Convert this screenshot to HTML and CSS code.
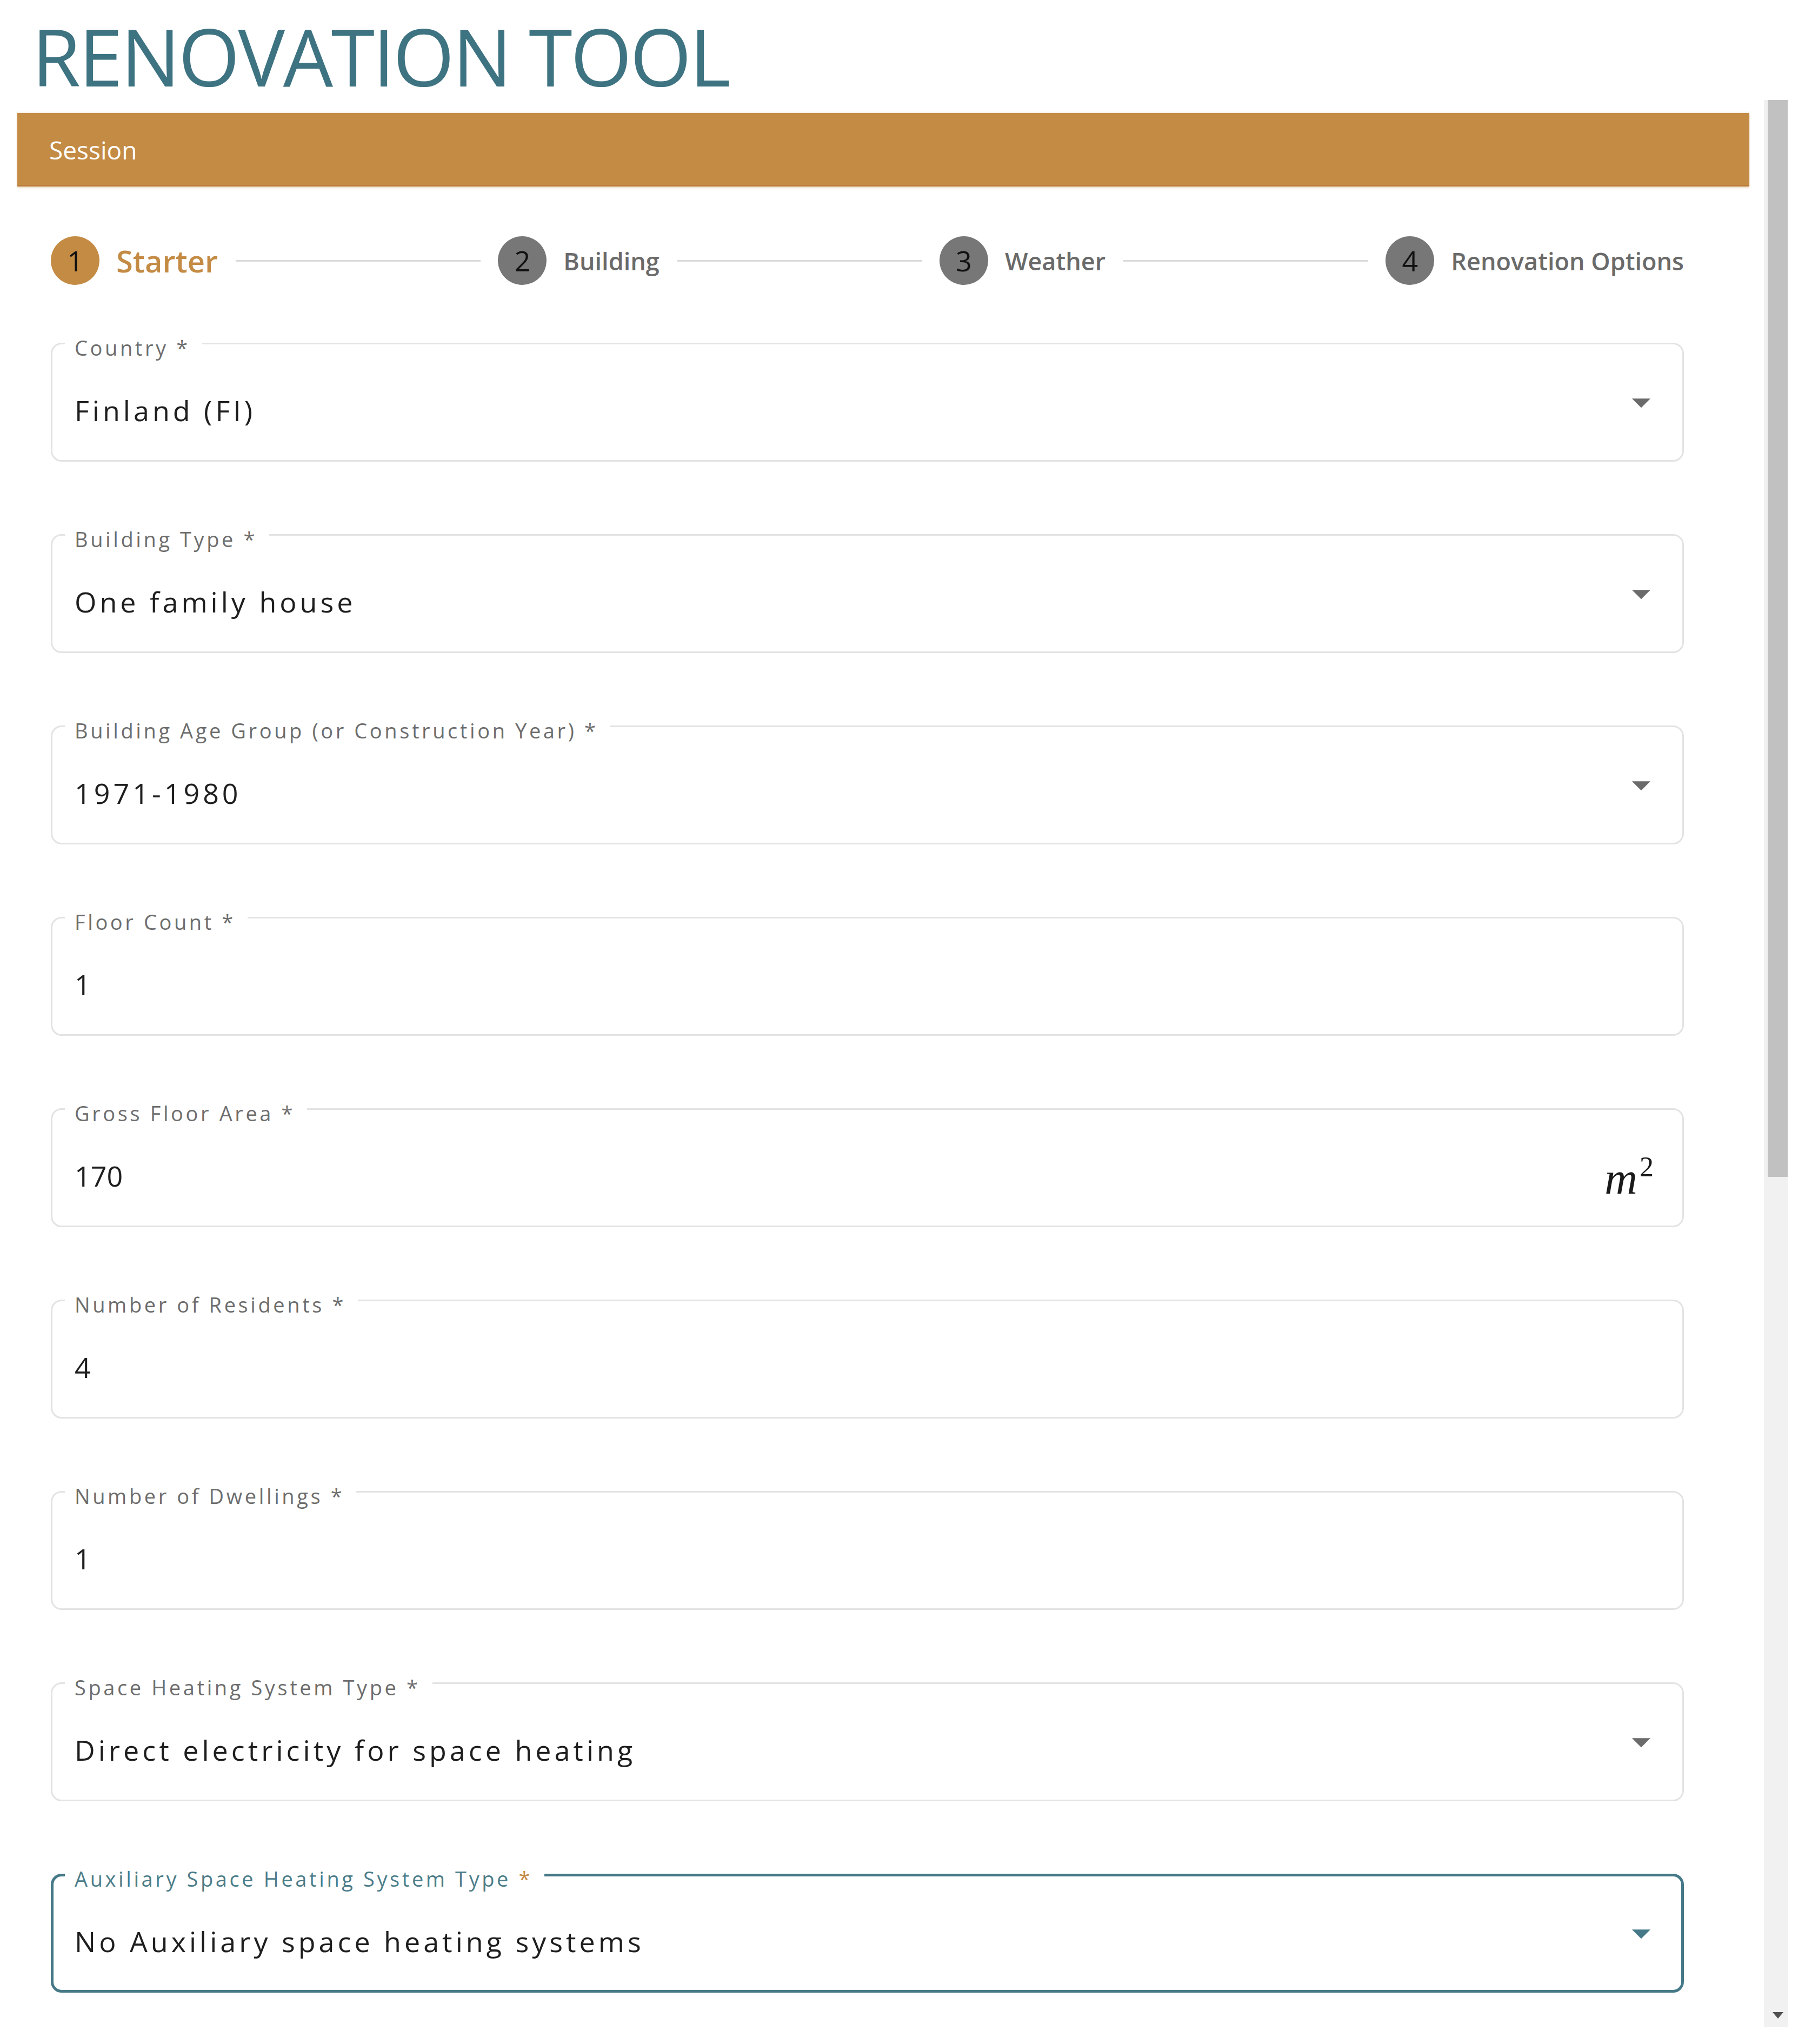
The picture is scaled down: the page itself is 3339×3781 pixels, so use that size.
FILE: index.html
```html
<!DOCTYPE html>
<html lang="en">
<head>
<meta charset="utf-8">
<title>Renovation Tool</title>
<link rel="stylesheet" href="styles.css">
</head>
<body>
<header class="page-head">
  <h1 class="title">RENOVATION TOOL</h1>
</header>
<div class="frame">
  <main class="content">
    <div class="session-bar">Session</div>
    <div class="inner">
      <ol class="stepper">
        <li class="step active"><span class="step-num">1</span><span class="step-label">Starter</span></li>
        <li class="connector"></li>
        <li class="step"><span class="step-num">2</span><span class="step-label">Building</span></li>
        <li class="connector"></li>
        <li class="step"><span class="step-num">3</span><span class="step-label">Weather</span></li>
        <li class="connector"></li>
        <li class="step"><span class="step-num">4</span><span class="step-label">Renovation Options</span></li>
      </ol>

      <form class="form">
        <div class="field">
          <span class="label">Country <span class="req">*</span></span>
          <span class="value select-value">Finland (FI)</span>
          <svg class="arrow" viewBox="0 0 24 24"><path d="M7 10l5 5 5-5z"/></svg>
        </div>
        <div class="field">
          <span class="label">Building Type <span class="req">*</span></span>
          <span class="value select-value">One family house</span>
          <svg class="arrow" viewBox="0 0 24 24"><path d="M7 10l5 5 5-5z"/></svg>
        </div>
        <div class="field">
          <span class="label">Building Age Group (or Construction Year) <span class="req">*</span></span>
          <span class="value select-value">1971-1980</span>
          <svg class="arrow" viewBox="0 0 24 24"><path d="M7 10l5 5 5-5z"/></svg>
        </div>
        <div class="field">
          <span class="label">Floor Count <span class="req">*</span></span>
          <span class="value">1</span>
        </div>
        <div class="field">
          <span class="label">Gross Floor Area <span class="req">*</span></span>
          <span class="value">170</span>
          <span class="unit"><span class="unit-m">m</span><sup class="unit-sup">2</sup></span>
        </div>
        <div class="field">
          <span class="label">Number of Residents <span class="req">*</span></span>
          <span class="value">4</span>
        </div>
        <div class="field">
          <span class="label">Number of Dwellings <span class="req">*</span></span>
          <span class="value">1</span>
        </div>
        <div class="field">
          <span class="label">Space Heating System Type <span class="req">*</span></span>
          <span class="value select-value">Direct electricity for space heating</span>
          <svg class="arrow" viewBox="0 0 24 24"><path d="M7 10l5 5 5-5z"/></svg>
        </div>
        <div class="field focused">
          <span class="label">Auxiliary Space Heating System Type <span class="req">*</span></span>
          <span class="value select-value">No Auxiliary space heating systems</span>
          <svg class="arrow" viewBox="0 0 24 24"><path d="M7 10l5 5 5-5z"/></svg>
        </div>
      </form>
    </div>
  </main>
  <div class="scrollbar">
    <div class="thumb"></div>
    <div class="track-space"></div>
    <div class="scroll-btn"><span class="scroll-arrow"></span></div>
  </div>
</div>
</body>
</html>
```

FILE: styles.css
```css
html, body {
  margin: 0;
  padding: 0;
  background: #ffffff;
}

body {
  font-family: "Open Sans", "Noto Sans", "DejaVu Sans", sans-serif;
  width: 3339px;
  height: 3781px;
  overflow: hidden;
}

.page-head {
  padding: 31px 0 8px 59px;
}

.title {
  margin: 0;
  height: 146px;
  font-size: 146px;
  line-height: 146px;
  font-weight: 400;
  color: #3e7382;
  letter-spacing: -3.4px;
  white-space: nowrap;
}

.frame {
  display: flex;
  height: 3565px;
  margin-right: 32px;
  overflow: hidden;
}

.content {
  flex: 1;
  padding: 24px 27px 0 32px;
  overflow: hidden;
}

.session-bar {
  height: 136px;
  line-height: 136px;
  background: #c48b45;
  color: #ffffff;
  font-size: 46px;
  padding-left: 59px;
  box-sizing: border-box;
  border-bottom: 3px solid #b97c38;
  box-shadow: 0 3px 3px rgba(196, 139, 69, 0.25), 0 -2px 2px rgba(196, 139, 69, 0.15);
}

.inner {
  padding: 0 121px 0 62px;
}

/* Stepper */
.stepper {
  list-style: none;
  margin: 92px 0 0 0;
  padding: 0;
  display: flex;
  align-items: center;
  height: 90px;
}

.step {
  display: flex;
  align-items: center;
  flex: none;
}

.step-num {
  width: 90px;
  height: 90px;
  border-radius: 50%;
  background: #777777;
  color: #111111;
  font-size: 52px;
  line-height: 90px;
  text-align: center;
}

.step.active .step-num {
  background: #c48b45;
}

.step-label {
  margin-left: 31px;
  font-size: 45px;
  font-weight: 600;
  color: #6a6a6a;
  white-space: nowrap;
}

.step.active .step-label {
  font-size: 56px;
  color: #c48b45;
}

.connector {
  flex: 1;
  height: 3px;
  background: #dadada;
  margin: 0 32px 0 33px;
}

/* Form fields */
.form {
  margin-top: 107px;
}

.field {
  position: relative;
  display: flex;
  align-items: center;
  height: 220px;
  box-sizing: border-box;
  border: 3px solid #e3e3e3;
  border-radius: 20px;
  padding: 0 35px 0 41px;
  margin-bottom: 134px;
}

.label {
  position: absolute;
  top: -13px;
  left: 23px;
  padding: 0 22px 0 18px;
  background: #ffffff;
  font-size: 38px;
  line-height: 38px;
  letter-spacing: 4.6px;
  color: #6d6d6d;
  white-space: nowrap;
}

.value {
  flex: 1;
  margin-top: 30px;
  font-size: 52px;
  line-height: 52px;
  color: #1e1e1e;
  white-space: nowrap;
}

.select-value {
  letter-spacing: 6px;
}

.arrow {
  width: 82px;
  height: 82px;
  flex: none;
  fill: #6b6b6b;
}

.unit {
  flex: none;
  margin-right: 18px;
  margin-top: 40px;
  font-family: "Liberation Serif", "Times New Roman", serif;
  color: #1a1a1a;
  white-space: nowrap;
}

.unit-m {
  font-style: italic;
  font-size: 84px;
  line-height: 80px;
}

.unit-sup {
  font-size: 52px;
  line-height: 0;
  vertical-align: 32px;
  margin-left: 4px;
}

.field.focused {
  border: 5px solid #457987;
  padding-left: 39px;
  padding-right: 33px;
}

.field.focused .label {
  top: -15px;
  left: 21px;
  color: #4b7d8a;
}

.field.focused .req {
  color: #c48b45;
}

.field.focused .arrow {
  fill: #457987;
}

/* Scrollbar */
.scrollbar {
  width: 44px;
  flex: none;
  background: #f1f1f1;
  display: flex;
  flex-direction: column;
}

.thumb {
  height: 1992px;
  margin-left: 7px;
  background: #c1c1c1;
}

.track-space {
  flex: 1;
}

.scroll-btn {
  height: 36px;
  padding-left: 7px;
  display: flex;
  justify-content: center;
}

.scroll-arrow {
  width: 0;
  height: 0;
  border-left: 10px solid transparent;
  border-right: 10px solid transparent;
  border-top: 12px solid #505050;
  margin-top: 8px;
}
```
